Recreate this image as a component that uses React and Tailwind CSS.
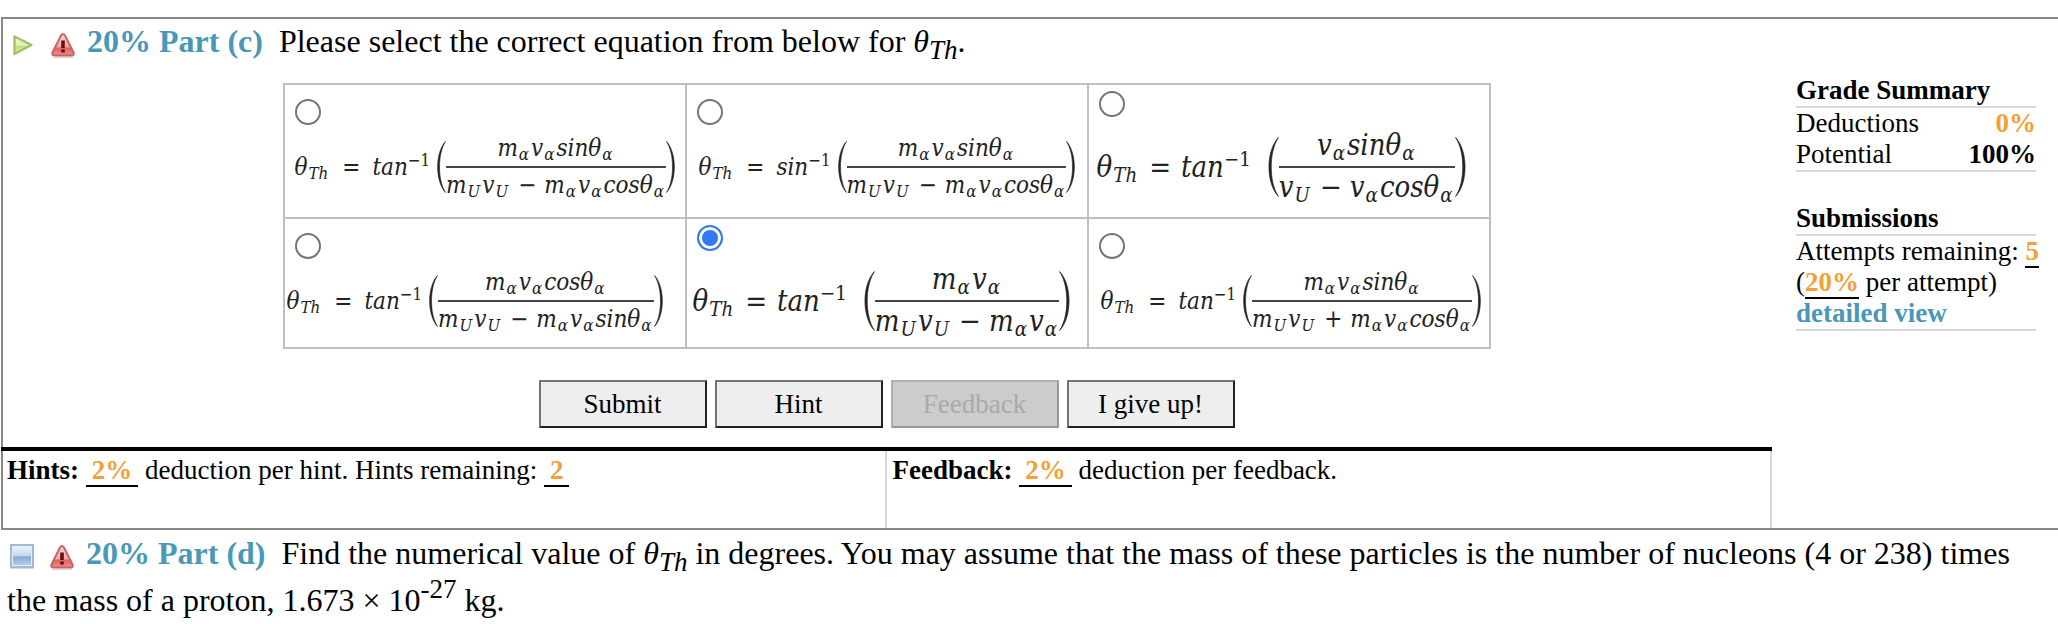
import { useState } from 'react';

const Sub = ({ children }) => (
  <sub className="text-[70%] ml-px mr-0.5">{children}</sub>
);

const Th = () => (
  <i>
    θ<sub className="text-[27px]">Th</sub>
  </i>
);

const Op = ({ children }) => <span className="mx-2 not-italic">{children}</span>;

// mass / velocity of the alpha particle and the uranium nucleus
const mA = <>m<Sub>α</Sub></>;
const vA = <>v<Sub>α</Sub></>;
const mU = <>m<Sub>U</Sub></>;
const vU = <>v<Sub>U</Sub></>;
const thetaA = <>θ<Sub>α</Sub></>;

const OPTIONS = [
  [
    { id: 'a', fn: 'tan', pad: 'pl-2.5', num: <>{mA}{vA}sin{thetaA}</>, den: <>{mU}{vU}<Op>−</Op>{mA}{vA}cos{thetaA}</> },
    { id: 'b', fn: 'sin', pad: 'pl-3', num: <>{mA}{vA}sin{thetaA}</>, den: <>{mU}{vU}<Op>−</Op>{mA}{vA}cos{thetaA}</> },
    { id: 'c', fn: 'tan', pad: 'pl-2', large: true, num: <>{vA}sin{thetaA}</>, den: <>{vU}<Op>−</Op>{vA}cos{thetaA}</> },
  ],
  [
    { id: 'd', fn: 'tan', pad: 'pl-0.5', num: <>{mA}{vA}cos{thetaA}</>, den: <>{mU}{vU}<Op>−</Op>{mA}{vA}sin{thetaA}</> },
    { id: 'e', fn: 'tan', pad: 'pl-1.5', large: true, num: <>{mA}{vA}</>, den: <>{mU}{vU}<Op>−</Op>{mA}{vA}</> },
    { id: 'f', fn: 'tan', pad: 'pl-3', num: <>{mA}{vA}sin{thetaA}</>, den: <>{mU}{vU}<Op>+</Op>{mA}{vA}cos{thetaA}</> },
  ],
];

function Paren({ large, right }) {
  return (
    <svg
      viewBox="0 0 10 52"
      preserveAspectRatio="none"
      className={large ? 'w-3 h-[60px] shrink-0' : 'w-2.5 h-[52px] shrink-0'}
      aria-hidden="true"
    >
      <path
        d={right ? 'M0.5 0.5C11 12 11 40 0.5 51.5C8.5 39 8.5 13 0.5 0.5Z' : 'M9.5 0.5C-1 12 -1 40 9.5 51.5C1.5 39 1.5 13 9.5 0.5Z'}
        fill="#222"
        stroke="#222"
        strokeWidth="0.6"
      />
    </svg>
  );
}

function Equation({ fn, num, den, large }) {
  return (
    <span
      className={`flex items-center h-[60px] whitespace-nowrap italic text-[#222] font-['DejaVu_Serif_Condensed','DejaVu_Serif',serif] ${
        large ? 'text-[29px]' : 'text-[24px]'
      }`}
    >
      <span>θ<Sub>Th</Sub></span>
      <span className={large ? 'mx-2.5 not-italic' : 'mx-3 not-italic'}>=</span>
      <span>{fn}<sup className="text-[70%] not-italic">−1</sup></span>
      <span className={large ? 'flex items-center ml-4' : 'flex items-center ml-1.5'}>
        <Paren large={large} />
        <span className="flex flex-col text-center">
          <span className={large ? 'h-[34px] leading-[26px]' : 'h-[30px] leading-[24px]'}>{num}</span>
          <span className="h-0.5 bg-[#444]" />
          <span className={large ? 'h-[34px] leading-[38px]' : 'h-[30px] leading-[34px]'}>{den}</span>
        </span>
        <Paren large={large} right />
      </span>
    </span>
  );
}

function Option({ option, checked, onSelect }) {
  return (
    <td className="border-2 border-[#bfbfbf] p-0 align-top">
      <label className={`flex flex-col ${option.large ? 'pt-1.5 gap-5' : 'pt-3.5 gap-3'}`}>
        <input
          type="radio"
          name="equation"
          value={option.id}
          checked={checked}
          onChange={() => onSelect(option.id)}
          className="appearance-none size-[26px] ml-2.5 rounded-full border-2 border-[#757575] bg-white checked:border-[#3478f6] checked:bg-[#3478f6] checked:shadow-[inset_0_0_0_3px_white]"
        />
        <span className={option.pad}>
          <Equation {...option} />
        </span>
      </label>
    </td>
  );
}

function PlayIcon() {
  return (
    <svg viewBox="0 0 27 26" className="inline-block align-middle w-[27px] h-[26px] mr-4" aria-hidden="true">
      <defs>
        <linearGradient id="play" x1="0" y1="0" x2="0" y2="1">
          <stop offset="0" stopColor="#f2f8dc" />
          <stop offset="0.5" stopColor="#e2f0b8" />
          <stop offset="0.55" stopColor="#c0de74" />
          <stop offset="1" stopColor="#dcecae" />
        </linearGradient>
      </defs>
      <path d="M6.5 4.5L23.5 13L6.5 22Z" fill="url(#play)" stroke="#a5c168" strokeWidth="2.4" strokeLinejoin="round" />
    </svg>
  );
}

function SquareIcon() {
  return (
    <svg viewBox="0 0 27 26" className="inline-block align-middle w-[27px] h-[26px] mr-4" aria-hidden="true">
      <defs>
        <linearGradient id="square" x1="0" y1="0" x2="0" y2="1">
          <stop offset="0" stopColor="#e9f0f9" />
          <stop offset="0.48" stopColor="#c5d8ee" />
          <stop offset="0.55" stopColor="#86aada" />
          <stop offset="1" stopColor="#b4cdea" />
        </linearGradient>
      </defs>
      <rect x="4" y="1" width="22" height="22" fill="#e6eef8" stroke="#a3b9d8" strokeWidth="2" />
      <rect x="6" y="3" width="18" height="18" fill="url(#square)" />
      <path d="M3 24.5h24" stroke="#dcdcdc" />
    </svg>
  );
}

function WarningIcon() {
  return (
    <svg viewBox="0 0 24 26" className="inline-block align-middle w-6 h-[26px] mr-3" aria-hidden="true">
      <defs>
        <linearGradient id="warning" x1="0" y1="0" x2="0" y2="1">
          <stop offset="0" stopColor="#f6d5d5" />
          <stop offset="0.6" stopColor="#efaaaa" />
          <stop offset="0.65" stopColor="#e06060" />
          <stop offset="1" stopColor="#f09090" />
        </linearGradient>
      </defs>
      <path d="M1.5 25.4h21" stroke="#d5cfcf" />
      <path
        d="M10 3.5Q12 0.5 14 3.5L22.5 20.5Q23.5 23.5 20.5 23.5H3.5Q0.5 23.5 1.5 20.5Z"
        fill="url(#warning)"
        stroke="#c86464"
        strokeWidth="2"
      />
      <path d="M12 8.5V16M12 17.5V20.5" stroke="#611" strokeWidth="3.6" />
    </svg>
  );
}

const BUTTONS = ['Submit', 'Hint', 'Feedback', 'I give up!'];

function Value({ children, className = '' }) {
  return <b className={`text-[#f3a036] border-b-2 border-black ${className}`}>{children}</b>;
}

export default function App() {
  const [selected, setSelected] = useState('e');

  return (
    <main className="pt-[17px] bg-white text-black overflow-hidden font-['Liberation_Serif','Times_New_Roman',serif] text-[27px] leading-[31px]">
      <section className="ml-px border-y-2 border-l-2 border-[#888]">
        <h2 className="pl-[5px] text-[32px] leading-[44px] whitespace-nowrap">
          <PlayIcon />
          <WarningIcon />
          <b className="text-[#4998b7] mr-4">20% Part (c)</b>
          Please select the correct equation from below for <Th />.
        </h2>

        <div className="flex">
          <div className="flex-1 min-w-0 -ml-0.5">
            <table className="w-[1208px] mx-auto mt-5 table-fixed border-collapse">
              <tbody>
                {OPTIONS.map((row, i) => (
                  <tr key={i} className={i === 0 ? 'h-[134px]' : 'h-[130px]'}>
                    {row.map((option) => (
                      <Option
                        key={option.id}
                        option={option}
                        checked={selected === option.id}
                        onSelect={setSelected}
                      />
                    ))}
                  </tr>
                ))}
              </tbody>
            </table>

            <div className="flex justify-center gap-2 mt-[31px]">
              {BUTTONS.map((name) => (
                <button
                  key={name}
                  type="button"
                  disabled={name === 'Feedback'}
                  className="w-[168px] h-12 border-2 border-t-[#767676] border-l-[#767676] border-r-[#212121] border-b-[#212121] bg-[#eee] disabled:bg-[#ccc] disabled:text-[#aaa] disabled:border-t-[#b0b0b0] disabled:border-l-[#b0b0b0] disabled:border-r-[#989898] disabled:border-b-[#989898]"
                >
                  {name}
                </button>
              ))}
            </div>

            {/* Deductions */}
            <div className="grid grid-cols-2 h-[81px] mt-[19px] border-t-4 border-black">
              <p className="pl-1.5 pt-1 border-r-2 border-[#d8d8d8]">
                <b>Hints:</b> <Value className="px-1.5">2%</Value> deduction per hint. Hints remaining:{' '}
                <Value className="px-1.5">2</Value>
              </p>
              <p className="pl-1.5 pt-1 border-r-2 border-[#d8d8d8]">
                <b>Feedback:</b> <Value className="px-1.5">2%</Value> deduction per feedback.
              </p>
            </div>
          </div>

          <aside className="w-[286px] pl-6 pr-[22px] pt-3 whitespace-nowrap">
            <h3 className="font-bold border-b-2 border-[#d8d8d8]">Grade Summary</h3>
            <dl className="border-b-2 border-[#d8d8d8]">
              <div className="flex justify-between">
                <dt>Deductions</dt>
                <dd className="font-bold text-[#f3a036]">0%</dd>
              </div>
              <div className="flex justify-between">
                <dt>Potential</dt>
                <dd className="font-bold">100%</dd>
              </div>
            </dl>
            <h3 className="font-bold mt-[31px] border-b-2 border-[#d8d8d8]">Submissions</h3>
            <div className="border-b-2 border-[#d8d8d8]">
              <p>Attempts remaining: <Value>5</Value></p>
              <p>(<Value>20%</Value> per attempt)</p>
              <a href="#details" className="block font-bold text-[#4998b7]">detailed view</a>
            </div>
          </aside>
        </div>
      </section>

      <section>
        <h2 className="px-[7px] text-[32px] leading-[47px]">
          <SquareIcon />
          <WarningIcon />
          <b className="text-[#4998b7] mr-4">20% Part (d)</b>
          Find the numerical value of <Th /> in degrees. You may assume that the mass of these particles is the number
          of nucleons (4 or 238) times the mass of a proton, 1.673 × 10<sup className="text-[27px]">-27</sup> kg.
        </h2>
      </section>
    </main>
  );
}
